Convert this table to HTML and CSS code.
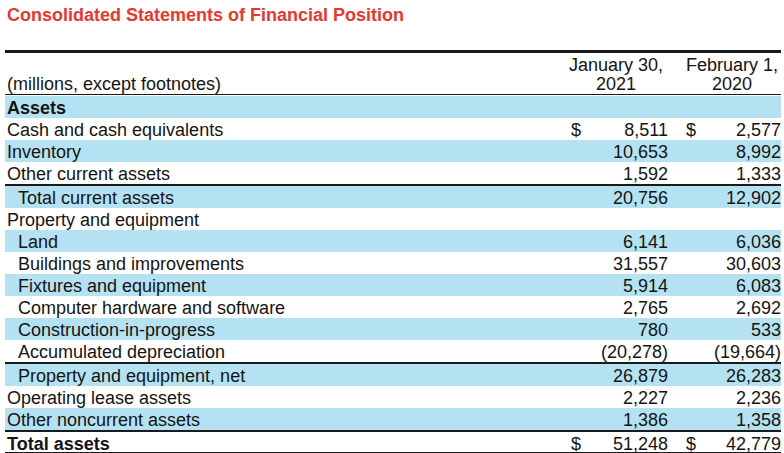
FILE: index.html
```html
<!DOCTYPE html>
<html>
<head>
<meta charset="utf-8">
<link rel="stylesheet" href="styles.css">
</head>
<body>
<h1 class="title">Consolidated Statements of Financial Position</h1>
<div class="table">
  <div class="head">
    <div class="head-label">(millions, except footnotes)</div>
    <div class="head-col h1"><div>January 30,</div><div>2021</div></div>
    <div class="head-col h2"><div>February 1,</div><div>2020</div></div>
  </div>
  <div class="row blue bold"><span class="lbl">Assets</span><span></span><span></span><span></span><span></span></div>
  <div class="row"><span class="lbl">Cash and cash equivalents</span><span class="cur">$</span><span class="num">8,511</span><span class="cur c2">$</span><span class="num">2,577</span></div>
  <div class="row blue"><span class="lbl">Inventory</span><span></span><span class="num">10,653</span><span></span><span class="num">8,992</span></div>
  <div class="row rule"><span class="lbl">Other current assets</span><span></span><span class="num">1,592</span><span></span><span class="num">1,333</span></div>
  <div class="row blue"><span class="lbl ind">Total current assets</span><span></span><span class="num">20,756</span><span></span><span class="num">12,902</span></div>
  <div class="row"><span class="lbl">Property and equipment</span><span></span><span></span><span></span><span></span></div>
  <div class="row blue"><span class="lbl ind">Land</span><span></span><span class="num">6,141</span><span></span><span class="num">6,036</span></div>
  <div class="row"><span class="lbl ind">Buildings and improvements</span><span></span><span class="num">31,557</span><span></span><span class="num">30,603</span></div>
  <div class="row blue"><span class="lbl ind">Fixtures and equipment</span><span></span><span class="num">5,914</span><span></span><span class="num">6,083</span></div>
  <div class="row"><span class="lbl ind">Computer hardware and software</span><span></span><span class="num">2,765</span><span></span><span class="num">2,692</span></div>
  <div class="row blue"><span class="lbl ind">Construction-in-progress</span><span></span><span class="num">780</span><span></span><span class="num">533</span></div>
  <div class="row rule"><span class="lbl ind">Accumulated depreciation</span><span></span><span class="num">(20,278)</span><span></span><span class="num">(19,664)</span></div>
  <div class="row blue"><span class="lbl ind">Property and equipment, net</span><span></span><span class="num">26,879</span><span></span><span class="num">26,283</span></div>
  <div class="row"><span class="lbl">Operating lease assets</span><span></span><span class="num">2,227</span><span></span><span class="num">2,236</span></div>
  <div class="row blue rule"><span class="lbl">Other noncurrent assets</span><span></span><span class="num">1,386</span><span></span><span class="num">1,358</span></div>
  <div class="row total"><span class="lbl bold">Total assets</span><span class="cur">$</span><span class="num">51,248</span><span class="cur c2">$</span><span class="num">42,779</span></div>
</div>
</body>
</html>
```
FILE: styles.css
```css
html, body {
  margin: 0;
  padding: 0;
  background: #ffffff;
}
body {
  font-family: "Liberation Sans", Arial, sans-serif;
  font-size: 18px;
  color: #141414;
  overflow: hidden;
}
.title {
  margin: 4px 0 0 7px;
  font-size: 18px;
  line-height: 22px;
  font-weight: bold;
  color: #e5392f;
}
.table {
  margin: 24px 3px 0 5px;
}
.head {
  display: grid;
  grid-template-columns: 558px 106px 1fr;
  border-top: 3px solid #1a1a1a;
  border-bottom: 1px solid #1a1a1a;
  padding-top: 3px;
  margin-bottom: 1px;
}
.head-label {
  align-self: end;
  padding-left: 2px;
  line-height: 19px;
}
.head-col {
  text-align: center;
  line-height: 19px;
}
.h2 {
  padding-left: 14px;
}
.row {
  display: grid;
  grid-template-columns: 560px 24px 79px 36px 1fr;
  box-sizing: border-box;
  height: 22px;
  padding-top: 2px;
  line-height: 20px;
  white-space: nowrap;
}
.blue {
  background: #b5e2f2;
}
.bold {
  font-weight: bold;
}
.lbl {
  padding-left: 2px;
}
.ind {
  padding-left: 13px;
}
.cur {
  padding-left: 6px;
}
.c2 {
  padding-left: 18px;
}
.num {
  text-align: right;
}
.rule {
  height: 24px;
  border-bottom: 2px solid #1a1a1a;
}
.total {
  height: 23px;
  border-bottom: 3px solid #1a1a1a;
}
```
